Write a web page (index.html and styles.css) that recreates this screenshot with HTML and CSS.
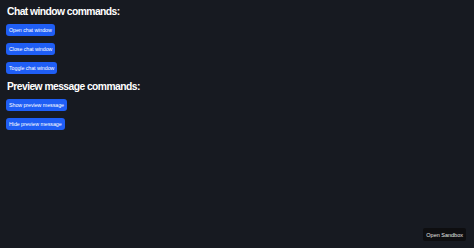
FILE: index.html
```html
<!DOCTYPE html>
<html>
<head>
<meta charset="utf-8">
<link rel="stylesheet" href="styles.css">
</head>
<body>
<main class="page">
  <h2 class="title">Chat window commands:</h2>
  <div class="group">
    <button class="btn">Open chat window</button>
    <button class="btn">Close chat window</button>
    <button class="btn">Toggle chat window</button>
  </div>
  <h2 class="title">Preview message commands:</h2>
  <div class="group">
    <button class="btn">Show preview message</button>
    <button class="btn">Hide preview message</button>
  </div>
</main>
<button class="sandbox">Open Sandbox</button>
</body>
</html>
```
FILE: styles.css
```css
html, body {
  margin: 0;
  padding: 0;
  background: #171a21;
  height: 100%;
}
body {
  font-family: "Liberation Sans", Arial, sans-serif;
  color: #fff;
}
.page {
  display: flex;
  flex-direction: column;
  align-items: flex-start;
  padding: 5px 6px;
}
.title {
  margin: 0;
  font-size: 10.3px;
  line-height: 14px;
  font-weight: bold;
  letter-spacing: -0.55px;
  padding-left: 1px;
}
.group {
  display: flex;
  flex-direction: column;
  align-items: flex-start;
  gap: 7px;
  margin: 5px 0 6px;
}
.btn {
  font-family: "Liberation Sans", Arial, sans-serif;
  font-size: 5.3px;
  line-height: 12px;
  height: 12px;
  padding: 0 3px;
  border: none;
  border-radius: 3px;
  background: #1f5ef5;
  color: #fff;
  letter-spacing: -0.05px;
}
.sandbox {
  position: fixed;
  right: 8px;
  bottom: 7px;
  font-family: "Liberation Sans", Arial, sans-serif;
  font-size: 5.5px;
  line-height: 12px;
  height: 13px;
  padding: 0 3px;
  border: none;
  border-radius: 2px;
  background: #0e0e10;
  color: #e6e6e6;
}
```
